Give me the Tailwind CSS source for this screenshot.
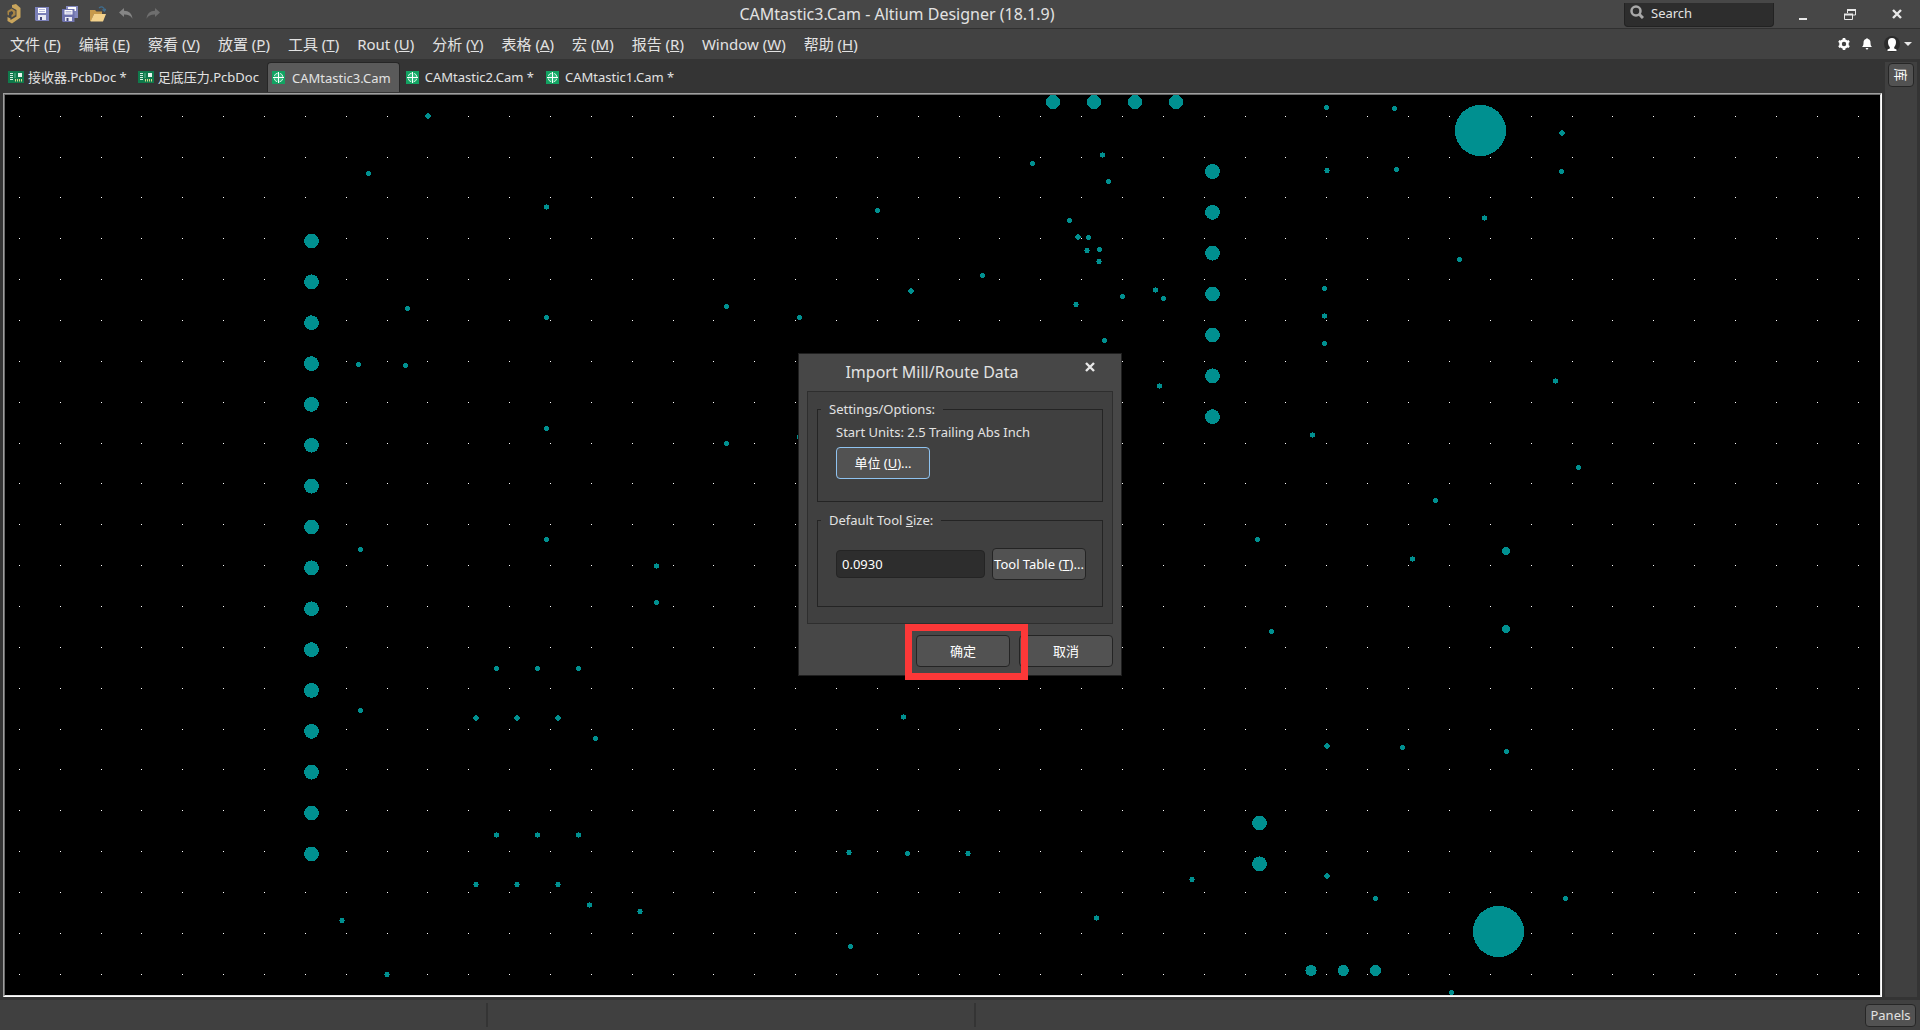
<!doctype html>
<html lang="zh-CN">
<head>
<meta charset="UTF-8">
<meta name="viewport" content="width=device-width, initial-scale=1.0">
<title>CAMtastic3.Cam - Altium Designer (18.1.9)</title>
<script src="https://cdn.jsdelivr.net/npm/@tailwindcss/browser@4"></script>
</head>

<body class="h-screen flex flex-col overflow-hidden bg-[#343434] text-[#e2e2e2] font-['Noto_Sans','Noto_Sans_CJK_SC',sans-serif]">

<!-- TITLE BAR -->
<header class="h-[29px] shrink-0 flex items-center bg-[#474747] border-b border-[#303030]">
<div class="w-[170px] flex items-center pl-[7px]">
<svg class="w-[14px] h-5 mr-[14px]" viewBox="0 0 14 20"><path d="M5 1l4-1 4.500 4v9.500L5 19.500 0.500 17v-4l3 1.500v1.500l6-3.500V6L5 3.500z" fill="#c9a55c"/><path d="M0.500 7l4-2.500 4 2.500v4l-4 2.500V11l1.500-1V8L4.500 7 2 8.500v3L0.500 10.500z" fill="#a88545"/></svg>
<button aria-label="Save" class="w-[14px] mr-[13px]"><svg viewBox="0 0 14 14"><path d="M0 0h14v14H1l-1-1z" fill="#7b80b8"/><path d="M3 1h8v5H3z" fill="#fff"/><path d="M4 2.500h6M4 4.500h6" stroke="#b6b9dc"/><path d="M3 8h8v5H3z" fill="#e9e9f4"/><path d="M5 10h2v3H5z" fill="#43487a"/></svg></button>
<button aria-label="Save All" class="w-4 mr-3"><svg viewBox="0 0 16 16"><path d="M4 0h12v12H4z" fill="#8388bd"/><path d="M6 1h8v4H6z" fill="#fff"/><path d="M0 3h12.500v13H1l-1-1z" fill="#6e72ad"/><path d="M2.500 4h8v4.500h-8z" fill="#fff"/><path d="M3.500 5.500h6M3.500 7h6" stroke="#b6b9dc"/><path d="M3 11h7v4H3z" fill="#e9e9f4"/><path d="M4.500 12h2v3h-2z" fill="#43487a"/></svg></button>
<button aria-label="Open" class="w-4 mr-[13px]"><svg viewBox="0 0 16 16"><path d="M0 4h5l1.500 1.500H12V8H4L1 15H0z" fill="#c79a4c"/><path d="M4 8h12l-3 7.500H0.500z" fill="#f3d28c"/><path d="M9 2c2.500-2 5-1 5.500 2M12.500 3.500l2 1.500 1.500-2" fill="none" stroke="#3f6d8f" stroke-width="1.300"/></svg></button>
<button aria-label="Undo" class="w-[14px] mr-[13px]"><svg viewBox="0 0 14 12"><path d="M5 0v2.700c5 0 8 2.800 8.500 8-1.700-3-4.500-4.300-8.500-4.200V9L0 4.500z" fill="#858585"/></svg></button>
<button aria-label="Redo" class="w-[14px]"><svg viewBox="0 0 14 12"><path d="M9 0v2.700C4 2.700 1 5.500 0.500 10.700 2.200 7.700 5 6.400 9 6.500V9l5-4.500z" fill="#6e6e6e"/></svg></button>
</div>
<h1 class="flex-1 text-center text-base leading-5">CAMtastic3.Cam - Altium Designer (18.1.9)</h1>
<div class="w-[150px] h-6 self-start relative">
<svg class="absolute left-[6px] top-[5px] w-[14px] h-[14px]" viewBox="0 0 14 14"><circle cx="6" cy="6" r="4.500" fill="none" stroke="#a8a8a8" stroke-width="2.500"/><path d="M9 9l4 4" stroke="#a8a8a8" stroke-width="3"/></svg>
<input type="text" aria-label="Search" placeholder="Search" class="w-full h-full pl-[26px] pb-[2px] rounded-b bg-[#2d2d2d] border border-t-0 border-[#222] text-[13px] placeholder:text-[#e2e2e2]">
</div>
<div class="w-[146px] flex items-center justify-between pl-[25px] pr-[18px]">
<button aria-label="Minimize" class="w-2 h-3 flex items-end"><span class="w-2 h-[2px] bg-[#e8e8e8]"></span></button>
<button aria-label="Restore" class="w-3"><svg viewBox="0 0 12 11"><path d="M3.500 4V1h8v5H9" fill="none" stroke="#e8e8e8"/><path d="M3 1h9M0 5.500h9" stroke="#e8e8e8" stroke-width="2"/><path d="M0.500 5v5.500h8V5" fill="none" stroke="#e8e8e8"/></svg></button>
<button aria-label="Close" class="w-[10px]"><svg viewBox="0 0 10 10"><path d="M1 1l8 8M9 1l-8 8" stroke="#e8e8e8" stroke-width="2.400"/></svg></button>
</div>
</header>

<!-- MENU -->
<nav class="h-[30px] shrink-0 flex items-center justify-between bg-[#424242] pl-[10px] pr-2">
<div class="flex gap-[18px] text-[15px] leading-5">
<button>文件 (<u>F</u>)</button>
<button>编辑 (<u>E</u>)</button>
<button>察看 (<u>V</u>)</button>
<button>放置 (<u>P</u>)</button>
<button>工具 (<u>T</u>)</button>
<button>Rout (<u>U</u>)</button>
<button>分析 (<u>Y</u>)</button>
<button>表格 (<u>A</u>)</button>
<button>宏 (<u>M</u>)</button>
<button>报告 (<u>R</u>)</button>
<button>Window (<u>W</u>)</button>
<button>帮助 (<u>H</u>)</button>
</div>
<div class="flex items-center">
<button aria-label="Settings" class="w-3 mr-3"><svg viewBox="0 0 12 12"><circle cx="6" cy="6" r="3.500" fill="none" stroke="#fff" stroke-width="2.600"/><path d="M6 0v2M6 10v2M0.800 3l1.700 1M9.500 8l1.700 1M0.800 9l1.700-1M9.500 4l1.700-1" stroke="#fff" stroke-width="2.600"/></svg></button>
<button aria-label="Notifications" class="w-[10px] mr-3"><svg viewBox="0 0 10 12"><path d="M5 0l1 1c2 .5 2.500 2 2.500 4 0 2 .5 3 1.500 4H0c1-1 1.500-2 1.500-4 0-2 .5-3.500 2.500-4zM3.500 10h3L5 12z" fill="#fff"/></svg></button>
<button aria-label="Account" class="flex items-center gap-1"><svg class="w-4 h-4" viewBox="0 0 16 16"><circle cx="8" cy="8" r="8" fill="#2b2b2b"/><path d="M8 2c2.500 0 4 1.500 4 4 0 2.500-.8 4-1.800 5v1.500l2.300 1v1.500h-9v-1.500l2.300-1V11C4.800 10 4 8.500 4 6c0-2.500 1.500-4 4-4z" fill="#fff"/></svg><svg class="w-2 h-1" viewBox="0 0 8 4"><path d="M0 0h8L4 4z" fill="#e8e8e8"/></svg></button>
</div>
</nav>

<div class="flex-1 min-h-0 flex gap-[3px] px-[3px] pb-[3px]">
<main class="flex-1 min-w-0 flex flex-col">

<!-- DOCUMENT TABS -->
<div class="h-[34px] shrink-0 flex items-end pt-[3px] text-[13px] leading-5">
<button class="h-[30px] mb-px flex items-center gap-1 pl-[5px] pr-[11px]">
<svg class="w-4 h-3" viewBox="0 0 16 12"><use href="#pcb"/></svg>接收器.PcbDoc *</button>
<button class="h-[30px] mb-px flex items-center gap-1 pr-2">
<svg class="w-4 h-3" viewBox="0 0 16 12"><use href="#pcb"/></svg>足底压力.PcbDoc</button>
<button class="h-[30px] mb-px flex items-center gap-[7px] pl-1 pr-2 rounded-t bg-[#5a5a5a] border border-b-0 border-[#262626]">
<svg class="w-[13px] h-[13px]" viewBox="0 0 13 13"><use href="#cam"/></svg>CAMtastic3.Cam</button>
<button class="h-[30px] mb-px flex items-center gap-[6px] pl-[6px] pr-3">
<svg class="w-[13px] h-[13px]" viewBox="0 0 13 13"><use href="#cam"/></svg>CAMtastic2.Cam *</button>
<button class="h-[30px] mb-px flex items-center gap-[6px]">
<svg class="w-[13px] h-[13px]" viewBox="0 0 13 13"><use href="#cam"/></svg>CAMtastic1.Cam *</button>
</div>

<!-- DRILL VIEW -->
<div class="flex-1 min-h-0 border border-t-[#a0a0a0] border-l-[#a0a0a0] border-r-white border-b-white">
<div class="h-full border border-t-[#696969] border-l-[#696969] border-r-[#e3e3e3] border-b-[#e3e3e3] bg-black">
<svg id="board" class="block w-full h-full" shape-rendering="crispEdges">
<g id="grid" fill="#fff"></g>
<g id="holes" fill="#009090" transform="translate(-5 -95)"></g>
</svg>
</div>
</div>
</main>

<!-- SIDE PANEL BAR -->
<aside class="w-8 mt-[3px] shrink-0 bg-[#404040] flex flex-col items-center pt-px">
<button class="w-[26px] h-6 flex items-center justify-center rounded bg-[#525252] border border-[#262626] text-[13px] text-white"><span class="rotate-90">库</span></button>
</aside>
</div>

<!-- STATUS BAR -->
<footer class="h-[30px] shrink-0 flex items-center bg-[#404040] pr-1">
<div class="w-[488px] h-6 border-r-2 border-[#343434]"></div>
<div class="w-[488px] h-6 border-r-2 border-[#343434]"></div>
<button class="ml-auto w-[51px] h-[23px] rounded bg-[#525252] border border-[#262626] text-[13px] leading-5">Panels</button>
</footer>

<!-- IMPORT DIALOG -->
<div class="fixed inset-0 flex items-center justify-center pb-px">
<form role="dialog" aria-labelledby="dialog-title" class="w-[324px] bg-[#474747] border border-[#1f1f1f] px-2 pb-2 text-[13px] leading-5">
<div class="h-[37px] flex items-start pr-[18px]">
<h2 id="dialog-title" class="flex-1 pt-2 pr-7 text-center text-base leading-5">Import Mill/Route Data</h2>
<button type="button" aria-label="Close" class="w-[10px] mt-2"><svg viewBox="0 0 10 10"><path d="M1 1l8 8M9 1l-8 8" stroke="#e8e8e8" stroke-width="2.400"/></svg></button>
</div>
<div class="bg-[#404040] border border-[#2e2e2e] px-[9px] pt-[7px] pb-4">
<fieldset class="border border-[#242424] pt-[3px] pb-[22px] pl-[18px]">
<legend class="-ml-[15px] px-2">Settings/Options:</legend>
<p>Start Units: 2.5 Trailing Abs Inch</p>
<button type="button" class="w-[94px] h-8 mt-[5px] rounded bg-[#525252] border border-[#8fc3f0] text-white">单位 (<u>U</u>)...</button>
</fieldset>
<fieldset class="mt-2 border border-[#242424] pt-[18px] pb-[26px] pl-[18px]">
<legend class="-ml-[15px] px-2"><label for="tool-size">Default Tool <u>S</u>ize:</label></legend>
<div class="flex items-center gap-[7px]">
<input id="tool-size" type="text" value="0.0930" class="w-[149px] h-7 px-[5px] rounded bg-[#2d2d2d] border border-[#242424] text-white">
<button type="button" class="w-[94px] h-8 rounded bg-[#525252] border border-[#242424] whitespace-nowrap flex items-center justify-center text-white"><span>Tool Table (<u>T</u>)...</span></button>
</div>
</fieldset>
</div>
<div class="flex justify-end gap-[9px] mt-[11px]">
<div class="relative">
<button type="submit" class="block w-[94px] h-8 rounded bg-[#525252] border border-[#242424] text-white">确定</button>
<div class="absolute -top-[11px] -left-[11px] w-[123px] h-[56px] border-7 border-[#fc3838] pointer-events-none z-10"></div>
</div>
<button type="button" class="w-[94px] h-8 rounded bg-[#525252] border border-[#242424] text-white">取消</button>
</div>
</form>
</div>

<!-- shared tab icons -->
<svg class="hidden">
<symbol id="pcb" viewBox="0 0 16 12"><path d="M0 0h16v12H0z" fill="#107a4c"/><path d="M2 2.500h3M2 4.500h3M2 6.500h3M2 8.500h3" stroke="#d5efe2"/><path d="M10 2h4v4h-4z" fill="#e8f6ef"/><path d="M7.500 8v2.500M9.500 8v2.500M11.500 8v2.500M13.500 8v2.500" stroke="#d9dc8a"/><path d="M7 2v5" stroke="#5bb88b"/></symbol>
<symbol id="cam" viewBox="0 0 13 13"><path d="M0 0h13v13H0z" fill="#12a362"/><circle cx="6.500" cy="6.500" r="4.500" fill="#2fb97c" stroke="#d7f3e5" stroke-dasharray="4.500 2.560" stroke-dashoffset="-1.300"/><path d="M6.500 1v11M1 6.500h11" stroke="#fff"/></symbol>
</svg>

<script>
const pitch=40.86;
const board=document.getElementById('board');
const grid=document.getElementById('grid');
const holes=document.getElementById('holes');
const NS='http://www.w3.org/2000/svg';

function hole(x,y,r){
const c=document.createElementNS(NS,'circle');
c.setAttribute('cx',x);c.setAttribute('cy',y);c.setAttribute('r',r);
holes.appendChild(c);
}

function drawGrid(){
const box=board.getBoundingClientRect();
grid.replaceChildren();
for(let x=14.34;x<box.width;x+=pitch){
for(let y=21.2;y<box.height;y+=pitch){
const p=document.createElementNS(NS,'rect');
p.setAttribute('x',Math.floor(x));p.setAttribute('y',Math.floor(y));
p.setAttribute('width',1);p.setAttribute('height',1);
grid.appendChild(p);
}
}
}

// pin header rows: x, y, dx, dy, count, radius
[
[311.5,241,0,pitch,16,7.4],
[1212.5,171.5,0,pitch,7,7.4],
[1053,102,41,0,4,7.1],
[1259.5,823,0,pitch,2,7.4],
[1311,970.5,32.3,0,3,5.6],
[1506,551,0,78,2,4],
[496.5,668.5,41,0,3,2.6],
[476,718,41,0,3,2.6],
[496.5,835,41,0,3,2.6],
[476,884.5,41,0,3,2.6],
[1324.5,288.5,0,27.5,3,2.6]
].forEach(([x,y,dx,dy,n,r])=>{
for(let i=0;i<n;i++)hole(x+dx*i,y+dy*i,r);
});

// mounting holes
hole(1480.5,130.5,25.6);
hole(1498.5,931.5,25.6);

// vias
[
[428,116],[368.5,173.5],[546.5,207],[407.5,308.5],[358.5,364.5],[405.5,365.5],[546.5,317.5],[726.5,306.5],
[546.5,428.5],[726.5,443.5],[877.5,210.5],[911,291],[982.5,275.5],[799.5,317.5],[799.5,437],[1032.5,163.5],
[1102.5,155],[1108.5,181.5],[1069.5,220.5],[1078,237],[1088.5,237.5],[1087,250.5],[1099.5,249.5],[1099,261.5],
[1076,304.5],[1122.5,296.5],[1155.5,290],[1163.5,298.5],[1104.5,340.5],[1159.5,386],[1326.5,107.5],[1394.5,108.5],
[1327,170.5],[1396.5,169.5],[1459.5,259.5],[1484.5,218],[1562,133],[1561.5,171.5],[1555.5,381],[1312.5,435],
[1578.5,467.5],[1435.5,500.5],[1257.5,539.5],[1412.5,559],[1271.5,631.5],[1327,746],[1402.5,747.5],[1506.5,751.5],
[1192,879.5],[1327,876],[1375.5,898.5],[1565.5,898.5],[1451.5,992.5],[546.5,539.5],[360.5,549.5],[656.5,566],
[656.5,602.5],[360.5,710.5],[342,920.5],[387,974.5],[595.5,738.5],[589.5,905],[640,911.5],[849,852.5],
[850.5,946.5],[907.5,853.5],[968,853.5],[903.5,717],[1096.5,918]
].forEach(([x,y])=>hole(x,y,2.6));

// refill the grid whenever the view changes size
new ResizeObserver(drawGrid).observe(board);
</script>
</body>
</html>
